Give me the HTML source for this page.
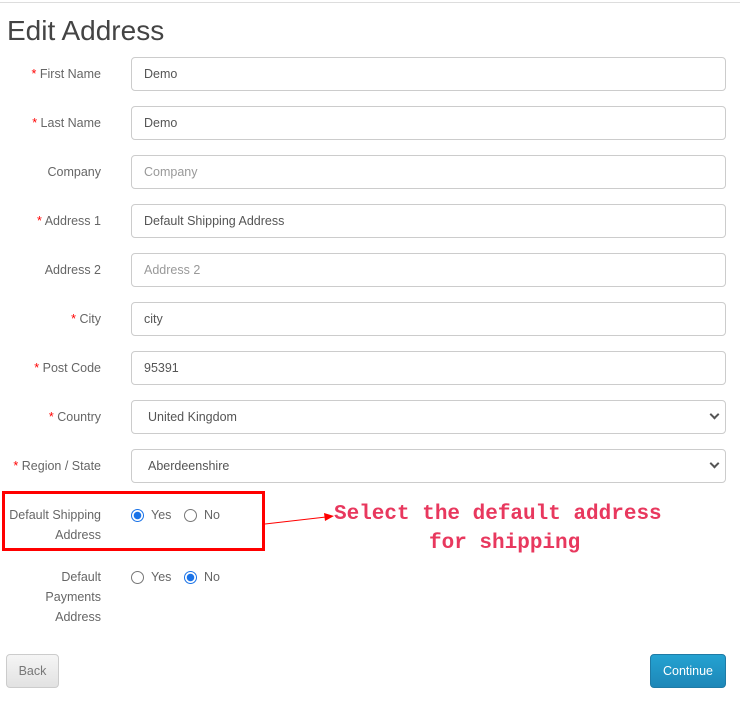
<!DOCTYPE html>
<html><head><meta charset="utf-8"><style>
*{box-sizing:border-box;margin:0;padding:0}
body{width:740px;height:703px;background:#fff;position:relative;font-family:"Liberation Sans",sans-serif;font-size:12.5px;color:#666;overflow:hidden}
.a{position:absolute}
.topline{left:0;top:2px;width:740px;height:1px;background:#ddd}
h1{position:absolute;left:7px;top:15px;font-size:28px;font-weight:normal;color:#444}
.lbl{position:absolute;right:639px;text-align:right;white-space:nowrap;line-height:20px}
.req{color:#f00}
.in{position:absolute;left:131px;width:595px;height:34px;border:1px solid #ccc;border-radius:4px;padding-left:12px;line-height:32px;color:#555}
.ph{color:#999}
.chev{position:absolute;right:7px;top:10px;width:7px;height:7px;border-right:2px solid #555;border-bottom:2px solid #555;transform:rotate(45deg)}
.radio{position:absolute;width:13px;height:13px;border:1px solid #777;border-radius:50%;background:#fff}
.radio.on{border:1px solid #1a73e8;background:radial-gradient(circle,#1a73e8 0 3.5px,#fff 4px)}
.rt{position:absolute;line-height:16px}
.ann{position:absolute;font-family:"Liberation Mono",monospace;font-weight:bold;font-size:21px;color:#e8385e;white-space:nowrap}
.btn{position:absolute;height:34px;border-radius:4px;line-height:32px;text-align:center;font-size:12.5px}
</style></head><body>
<div class="a topline"></div>
<h1>Edit Address</h1>

<div class="lbl" style="top:64px"><span class="req">*</span> First Name</div>
<div class="in" style="top:57px">Demo</div>
<div class="lbl" style="top:113px"><span class="req">*</span> Last Name</div>
<div class="in" style="top:106px">Demo</div>
<div class="lbl" style="top:162px">Company</div>
<div class="in ph" style="top:155px">Company</div>
<div class="lbl" style="top:211px"><span class="req">*</span> Address 1</div>
<div class="in" style="top:204px">Default Shipping Address</div>
<div class="lbl" style="top:260px">Address 2</div>
<div class="in ph" style="top:253px">Address 2</div>
<div class="lbl" style="top:309px"><span class="req">*</span> City</div>
<div class="in" style="top:302px">city</div>
<div class="lbl" style="top:358px"><span class="req">*</span> Post Code</div>
<div class="in" style="top:351px">95391</div>
<div class="lbl" style="top:407px"><span class="req">*</span> Country</div>
<div class="in" style="top:400px;padding-left:16px">United Kingdom<span class="chev"></span></div>
<div class="lbl" style="top:456px"><span class="req">*</span> Region / State</div>
<div class="in" style="top:449px;padding-left:16px">Aberdeenshire<span class="chev"></span></div>

<div class="a" style="left:2px;top:491px;width:263px;height:60px;border:3px solid #f00"></div>
<div class="lbl" style="top:505px;line-height:20px">Default Shipping<br>Address</div>
<div class="radio on" style="left:131px;top:509px"></div><div class="rt" style="left:151px;top:507px">Yes</div>
<div class="radio" style="left:184px;top:509px"></div><div class="rt" style="left:204px;top:507px">No</div>

<svg class="a" style="left:264px;top:510px" width="72" height="20"><line x1="1" y1="14" x2="62" y2="7" stroke="#f00" stroke-width="1"/><polygon points="70,6 60,3 61,11" fill="#f00"/></svg>
<div class="ann" style="left:334px;top:503px">Select the default address</div>
<div class="ann" style="left:429px;top:532px">for shipping</div>

<div class="lbl" style="top:567px;line-height:20px">Default<br>Payments<br>Address</div>
<div class="radio" style="left:131px;top:571px"></div><div class="rt" style="left:151px;top:569px">Yes</div>
<div class="radio on" style="left:184px;top:571px"></div><div class="rt" style="left:204px;top:569px">No</div>

<div class="btn" style="left:6px;top:654px;width:53px;border:1px solid #ccc;background:linear-gradient(#f5f5f5,#e2e2e2);color:#777">Back</div>
<div class="btn" style="left:650px;top:654px;width:76px;border:1px solid #1f7ba6;background:linear-gradient(#24a2d1,#1e87b8);color:#fff">Continue</div>
</body></html>
